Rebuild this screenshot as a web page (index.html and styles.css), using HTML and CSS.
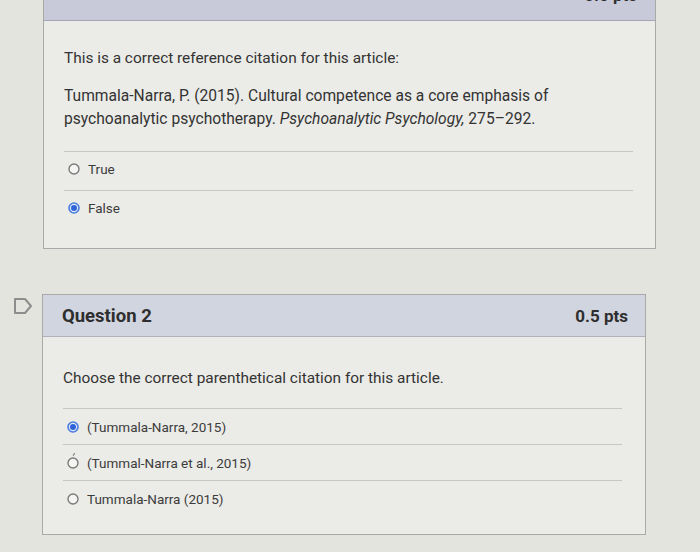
FILE: index.html
```html
<!DOCTYPE html>
<html>
<head>
<meta charset="utf-8">
<link rel="stylesheet" href="styles.css">
</head>
<body>
<div class="page">
  <div class="card card-one">
    <div class="card-head head-one">
      <span class="q-title"></span>
      <span class="pts">0.5 pts</span>
    </div>
    <div class="card-body body-one">
      <p class="prompt">This is a correct reference citation for this article:</p>
      <p class="citation">Tummala-Narra, P. (2015). Cultural competence as a core emphasis of<br>psychoanalytic psychotherapy. <i>Psychoanalytic Psychology,</i> 275–292.</p>
      <div class="answers answers-one">
        <div class="answer">
          <svg class="radio" viewBox="0 0 12 12" width="12" height="12"><circle cx="6" cy="6" r="5" fill="#f4f4f2" stroke="#7a7a7a" stroke-width="1.4"/></svg>
          <span>True</span>
        </div>
        <div class="answer">
          <svg class="radio" viewBox="0 0 12 12" width="12" height="12"><circle cx="6" cy="6" r="5" fill="#dfe8fb" stroke="#4a7ce0" stroke-width="1.6"/><circle cx="6" cy="6" r="3" fill="#2f63d6"/></svg>
          <span>False</span>
        </div>
      </div>
    </div>
  </div>

  <div class="q2-row">
    <div class="flag">
      <svg viewBox="0 0 20 18" width="20" height="18"><path d="M2 2 H12 L18 9 L12 16 H2 Z" fill="none" stroke="#8d8d8d" stroke-width="2" stroke-linejoin="round"/></svg>
    </div>
    <div class="card card-two">
      <div class="card-head head-two">
        <span class="q-title">Question 2</span>
        <span class="pts">0.5 pts</span>
      </div>
      <div class="card-body body-two">
        <p class="prompt">Choose the correct parenthetical citation for this article.</p>
        <div class="answers answers-two">
          <div class="answer">
            <svg class="radio" viewBox="0 0 12 12" width="12" height="12"><circle cx="6" cy="6" r="5" fill="#dfe8fb" stroke="#4a7ce0" stroke-width="1.6"/><circle cx="6" cy="6" r="3" fill="#2f63d6"/></svg>
            <span>(Tummala-Narra, 2015)</span>
          </div>
          <div class="answer">
            <svg class="radio" viewBox="0 0 12 12" width="12" height="12" overflow="visible"><circle cx="6" cy="6" r="5" fill="#f4f4f2" stroke="#7a7a7a" stroke-width="1.4"/><path d="M6.2 -1.2 L7.6 -4" stroke="#6a6a6a" stroke-width="1"/></svg>
            <span>(Tummal-Narra et al., 2015)</span>
          </div>
          <div class="answer">
            <svg class="radio" viewBox="0 0 12 12" width="12" height="12"><circle cx="6" cy="6" r="5" fill="#f4f4f2" stroke="#7a7a7a" stroke-width="1.4"/></svg>
            <span>Tummala-Narra (2015)</span>
          </div>
        </div>
      </div>
    </div>
  </div>
</div>
</body>
</html>
```

FILE: styles.css
```css
html, body {
  margin: 0;
  padding: 0;
}
body {
  background: #e4e4df;
  font-family: Roboto, "Liberation Sans", Arial, sans-serif;
  color: #333333;
  width: 700px;
  height: 552px;
  overflow: hidden;
}
.page {
  display: flex;
  flex-direction: column;
}
.card {
  border: 1px solid #a9a9a9;
  background: #ebebe7;
  box-sizing: border-box;
}
.card-one {
  margin-left: 43px;
  width: 613px;
  margin-top: -31px;
}
.card-head {
  display: flex;
  justify-content: space-between;
  align-items: center;
  box-sizing: border-box;
}
.head-one {
  height: 51px;
  background: #c8cad9;
  border-bottom: 1px solid #a5a7b6;
  padding: 0 18px 0 20px;
}
.q-title {
  font-weight: 700;
  font-size: 18.5px;
  color: #2e2e2e;
}
.pts {
  font-weight: 700;
  font-size: 17px;
  color: #2e2e2e;
}
.card-body p {
  margin: 0;
}
.body-one {
  padding: 27px 22px 19px 20px;
}
.prompt {
  font-size: 15.5px;
  line-height: 20px;
}
.citation {
  font-size: 15.6px;
  line-height: 23px;
  margin-top: 17px !important;
}
.answers-one {
  margin-top: 20px;
}
.answer {
  display: flex;
  align-items: center;
  gap: 8px;
  padding-left: 4px;
  border-top: 1px solid #c6c6c2;
  font-size: 13.5px;
  color: #3c3c3c;
  box-sizing: border-box;
}
.answers-one .answer {
  height: 39px;
  padding-bottom: 4px;
}
.radio {
  flex: none;
}
.q2-row {
  display: flex;
  margin-top: 45px;
}
.flag {
  width: 42px;
  flex: none;
  box-sizing: border-box;
  padding: 3px 0 0 13px;
}
.card-two {
  width: 604px;
}
.head-two {
  height: 42px;
  background: #d1d5df;
  border-bottom: 1px solid #b0b3bb;
  padding: 0 17px 0 19px;
}
.body-two {
  padding: 31px 23px 18px 20px;
}
.prompt {
  font-size: 15.4px;
}
.answers-two {
  margin-top: 20px;
}
.answers-two .answer {
  height: 36px;
}
```
